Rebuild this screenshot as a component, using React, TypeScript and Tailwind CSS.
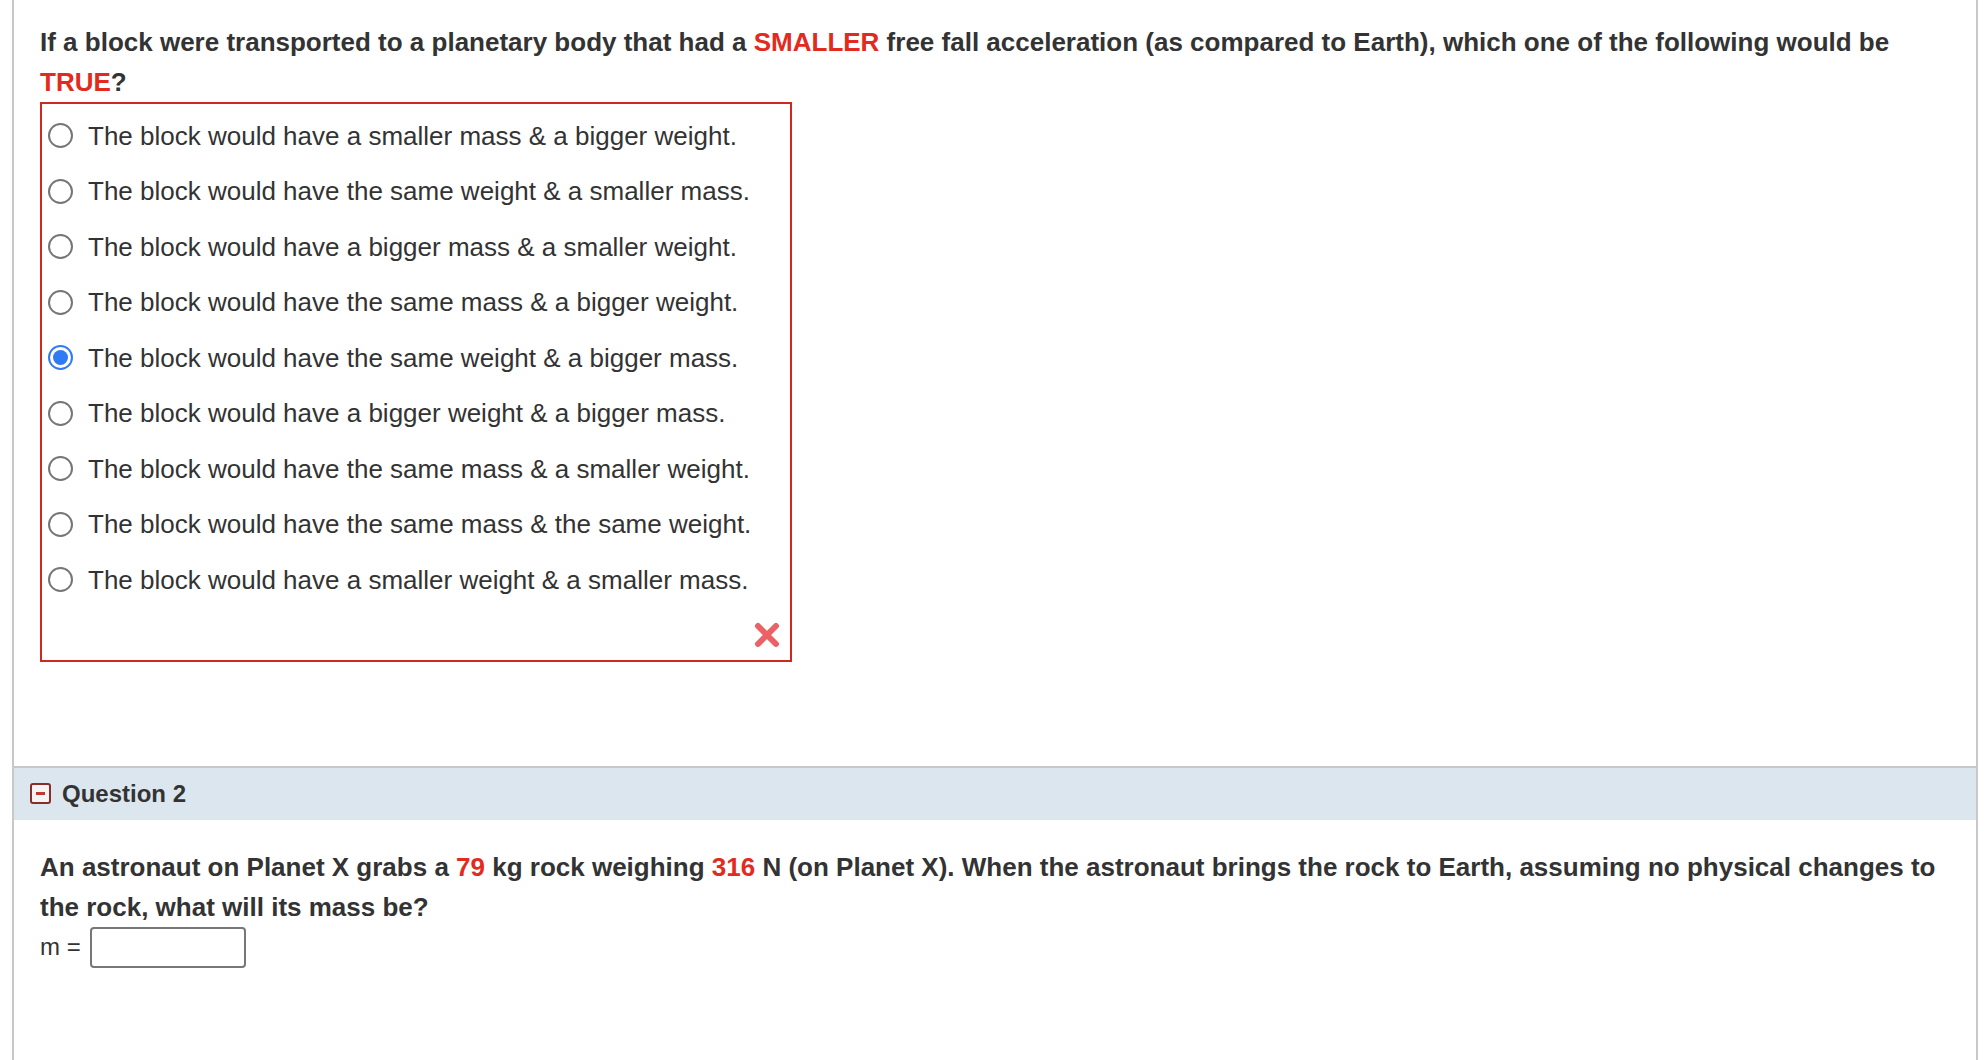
import React, { useState } from 'react';

const options = [
    'The block would have a smaller mass & a bigger weight.',
    'The block would have the same weight & a smaller mass.',
    'The block would have a bigger mass & a smaller weight.',
    'The block would have the same mass & a bigger weight.',
    'The block would have the same weight & a bigger mass.',
    'The block would have a bigger weight & a bigger mass.',
    'The block would have the same mass & a smaller weight.',
    'The block would have the same mass & the same weight.',
    'The block would have a smaller weight & a smaller mass.',
];

function Radio({ checked }: { checked: boolean }) {
    if (checked) {
        return (
            <span className="w-[25px] h-[25px] rounded-full border-[2px] border-[#2f7bf5] flex items-center justify-center shrink-0 bg-white">
                <span className="w-[15px] h-[15px] rounded-full bg-[#2f7bf5]"></span>
            </span>
        );
    }
    return <span className="w-[25px] h-[25px] rounded-full border-[2px] border-[#767676] shrink-0 bg-white"></span>;
}

export default function App() {
    const [selected, setSelected] = useState(4);
    const [mass, setMass] = useState('');

    return (
        <div className="w-full min-h-screen bg-white text-[#333333] font-['Liberation_Sans',Arial,Helvetica,sans-serif]">
            <div className="ml-[12px] w-[1966px] min-h-[1060px] border-x-2 border-[#c8c8c8]">
                {/* question 1 */}
                <div className="px-[26px] pt-[22px]">
                    <p className="text-[26px] font-bold leading-[40px]">
                        If a block were transported to a planetary body that had a{' '}
                        <span className="text-[#e32a1e]">SMALLER</span> free fall acceleration (as compared to Earth), which one of the following would be{' '}
                        <span className="text-[#e32a1e]">TRUE</span>?
                    </p>
                    <div className="w-[752px] border-2 border-[#d0281e] pt-[4px] pb-[12px]">
                        {options.map((opt, i) => (
                            <label
                                key={i}
                                onClick={() => setSelected(i)}
                                className="h-[55.5px] flex items-center gap-[15px] pl-[6px] text-[26px] leading-none cursor-pointer"
                            >
                                <Radio checked={selected === i} />
                                <span>{opt}</span>
                            </label>
                        ))}
                        <div className="flex justify-end pr-[9px] pt-[14px]">
                            <svg width="28" height="26" viewBox="0 0 28 26" style={{ filter: 'blur(0.4px)' }}>
                                <path d="M5 4 L23 22 M23 4 L5 22" stroke="#ea6166" strokeWidth="6" strokeLinecap="round" />
                            </svg>
                        </div>
                    </div>
                </div>

                {/* question 2 */}
                <div className="mt-[104px] border-t-2 border-[#c8c8c8] bg-[#dce6ef] h-[54px] flex items-center gap-[11px] pl-[16px]">
                    <span className="w-[21px] h-[21px] rounded-[3px] border-2 border-[#8b2c2c] bg-[#f4f4f4] flex items-center justify-center">
                        <span className="w-[9px] h-[3px] bg-[#c0392b]"></span>
                    </span>
                    <span className="text-[24px] font-bold">Question 2</span>
                </div>
                <div className="px-[26px] pt-[27px]">
                    <p className="text-[26px] font-bold leading-[40px]">
                        An astronaut on Planet X grabs a <span className="text-[#e32a1e]">79</span> kg rock weighing{' '}
                        <span className="text-[#e32a1e]">316</span> N (on Planet X). When the astronaut brings the rock to Earth, assuming no physical changes to the rock, what will its mass be?
                    </p>
                    <div className="flex items-center gap-[9px]">
                        <span className="text-[24px]">m =</span>
                        <input
                            value={mass}
                            onChange={(e) => setMass(e.target.value)}
                            className="w-[156px] h-[41px] border-2 border-[#777777] rounded-[4px] px-2 text-[24px] outline-none"
                        />
                    </div>
                </div>
            </div>
        </div>
    );
}
